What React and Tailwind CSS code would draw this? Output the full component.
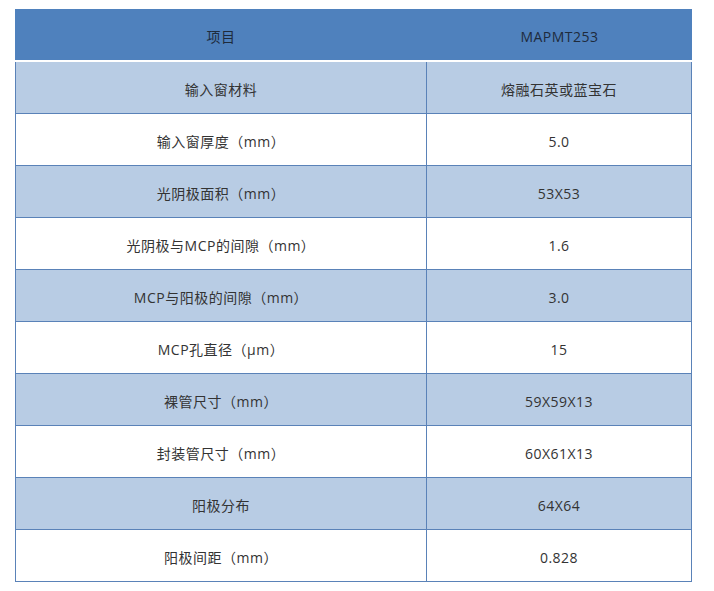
import React from "react";

const rows = [
  ["输入窗材料", "熔融石英或蓝宝石"],
  ["输入窗厚度（mm）", "5.0"],
  ["光阴极面积（mm）", "53X53"],
  ["光阴极与MCP的间隙（mm）", "1.6"],
  ["MCP与阳极的间隙（mm）", "3.0"],
  ["MCP孔直径（μm）", "15"],
  ["裸管尺寸（mm）", "59X59X13"],
  ["封装管尺寸（mm）", "60X61X13"],
  ["阳极分布", "64X64"],
  ["阳极间距（mm）", "0.828"],
];

export default function App() {
  return (
    <div
      className="w-[714px] h-[591px] bg-white pt-[9px] pl-[15px] text-[14px] tracking-[0.5px] text-[#333333]"
      style={{ fontFamily: '"Open Sans", "Noto Sans CJK SC", sans-serif' }}
    >
      <div className="w-[677px]">
        <div className="flex h-[51px] bg-[#4f81bd] text-[#1e2b3c] border-b-[2px] border-white box-content">
          <div className="w-[412px] flex items-center justify-center pt-[4px]">项目</div>
          <div className="flex-1 flex items-center justify-center pt-[4px]">MAPMT253</div>
        </div>
        {rows.map((r, i) => (
          <div
            key={i}
            className={
              "flex h-[52px] border-x border-b border-[#5a82b8] " +
              (i % 2 === 0 ? "bg-[#b8cce4]" : "bg-white")
            }
          >
            <div className="w-[411px] flex items-center justify-center border-r border-[#5a82b8] pt-[4px]">
              {r[0]}
            </div>
            <div className="flex-1 flex items-center justify-center pt-[4px]">{r[1]}</div>
          </div>
        ))}
      </div>
    </div>
  );
}
